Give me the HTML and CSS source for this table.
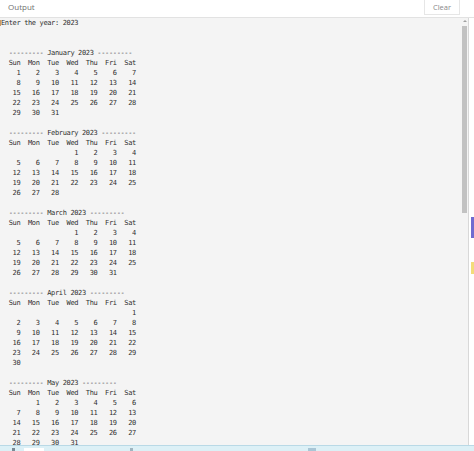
FILE: index.html
```
<!DOCTYPE html>
<html>
<head>
<meta charset="utf-8">
<link rel="stylesheet" href="styles.css">
</head>
<body>
<div class="app">
  <div class="topbar">
    <span class="title">Output</span>
    <button class="clear">Clear</button>
    <div class="topside"></div>
  </div>
  <div class="main">
    <div class="console"><span class="caret"></span><pre class="out">Enter the year: 2023


  --------- January 2023 ---------
  Sun  Mon  Tue  Wed  Thu  Fri  Sat
    1    2    3    4    5    6    7
    8    9   10   11   12   13   14
   15   16   17   18   19   20   21
   22   23   24   25   26   27   28
   29   30   31

  --------- February 2023 ---------
  Sun  Mon  Tue  Wed  Thu  Fri  Sat
                   1    2    3    4
    5    6    7    8    9   10   11
   12   13   14   15   16   17   18
   19   20   21   22   23   24   25
   26   27   28

  --------- March 2023 ---------
  Sun  Mon  Tue  Wed  Thu  Fri  Sat
                   1    2    3    4
    5    6    7    8    9   10   11
   12   13   14   15   16   17   18
   19   20   21   22   23   24   25
   26   27   28   29   30   31

  --------- April 2023 ---------
  Sun  Mon  Tue  Wed  Thu  Fri  Sat
                                  1
    2    3    4    5    6    7    8
    9   10   11   12   13   14   15
   16   17   18   19   20   21   22
   23   24   25   26   27   28   29
   30

  --------- May 2023 ---------
  Sun  Mon  Tue  Wed  Thu  Fri  Sat
         1    2    3    4    5    6
    7    8    9   10   11   12   13
   14   15   16   17   18   19   20
   21   22   23   24   25   26   27
   28   29   30   31
</pre></div>
    <div class="scrollbar">
      <div class="arrow"></div>
      <div class="thumb"></div>
    </div>
    <div class="side">
      <div class="mark purple"></div>
      <div class="mark yellow"></div>
    </div>
  </div>
  <div class="bottombar">
    <span class="bi b1"></span>
    <span class="bi b2"></span>
    <span class="bi b3"></span>
    <span class="bi b4"></span>
    <span class="bi b5"></span>
  </div>
</div>
</body>
</html>
```
FILE: styles.css
```
html, body {
  margin: 0;
  padding: 0;
  background: #ffffff;
}
.app {
  width: 474px;
  height: 451px;
  display: grid;
  grid-template-rows: 18px 427px 6px;
  overflow: hidden;
}
.topbar {
  display: flex;
  align-items: flex-start;
  background: #ffffff;
  border-bottom: 1px solid #e2e2e2;
  box-sizing: border-box;
}
.title {
  font-family: "Open Sans", sans-serif;
  font-size: 8px;
  color: #707070;
  margin-left: 8px;
  margin-top: 2px;
  line-height: 10px;
  flex: 1;
}
.clear {
  font-family: "Open Sans", sans-serif;
  font-size: 7.5px;
  color: #8a8a8a;
  background: #ffffff;
  border: 1px solid #e6e6e6;
  border-top: none;
  width: 36px;
  height: 15px;
  padding: 0;
  margin-right: 14px;
  line-height: 12px;
}
.topside {
  width: 0;
}
.main {
  display: grid;
  grid-template-columns: 461px 7px 6px;
  background: #f4f4f4;
  min-height: 0;
}
.console {
  position: relative;
  overflow: hidden;
}
.caret {
  position: absolute;
  left: 0;
  top: 2px;
  width: 1px;
  height: 6px;
  background: #c89a6a;
}
.out {
  margin: 0;
  padding: 0 0 0 1px;
  font-family: "DejaVu Sans Mono", monospace;
  font-size: 7px;
  letter-spacing: -0.36px;
  line-height: 10px;
  color: #303030;
}
.scrollbar {
  display: flex;
  flex-direction: column;
  align-items: center;
  background: #f4f4f4;
}
.arrow {
  width: 0;
  height: 0;
  border-left: 2px solid transparent;
  border-right: 2px solid transparent;
  border-bottom: 2px solid #a0a0a0;
  margin-top: 2px;
}
.thumb {
  width: 5px;
  height: 187px;
  background: #c2c2c2;
  margin-top: 4px;
}
.side {
  background: #ffffff;
  border-left: 1px solid #d8d8d8;
  display: flex;
  flex-direction: column;
  align-items: flex-end;
}
.mark {
  width: 3px;
}
.purple {
  height: 21px;
  background: #6f6bd0;
  margin-top: 199px;
}
.yellow {
  height: 12px;
  background: #f3dc7a;
  margin-top: 24px;
}
.bottombar {
  background: #dcf0f6;
  border-top: 1px solid #b9d9e6;
  box-sizing: border-box;
  display: flex;
  align-items: flex-end;
}
.bi {
  display: inline-block;
  height: 3px;
}
.b1 {
  width: 3px;
  background: #7a8a95;
  margin-left: 12px;
}
.b2 {
  width: 20px;
  background: #ffffff;
  margin-left: 9px;
}
.b3 {
  width: 3px;
  background: #9fb5c0;
  margin-left: 86px;
}
.b4 {
  width: 8px;
  background: #a9c6d6;
  margin-left: 175px;
}
.b5 {
  width: 0;
}
```
